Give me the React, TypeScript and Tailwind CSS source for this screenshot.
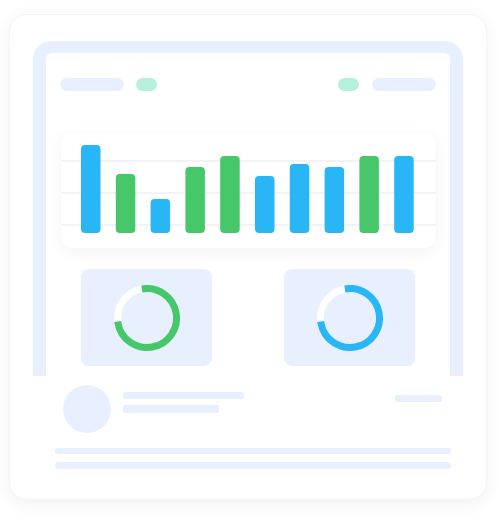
const bars = [
  { top: 12, color: '#29b6f6' },
  { top: 41, color: '#45c76a' },
  { top: 66, color: '#29b6f6' },
  { top: 34, color: '#45c76a' },
  { top: 23, color: '#45c76a' },
  { top: 43, color: '#29b6f6' },
  { top: 31, color: '#29b6f6' },
  { top: 34, color: '#29b6f6' },
  { top: 23, color: '#45c76a' },
  { top: 23, color: '#29b6f6' },
];

function BarChart() {
  return (
    <svg width="375" height="115" viewBox="0 0 375 115">
      {[28, 60, 92].map((y) => (
        <rect key={y} x="0" y={y - 1} width="375" height="2" fill="#f2f3f5" />
      ))}
      {bars.map((b, i) => (
        <rect
          key={i}
          x={20 + i * 34.8}
          y={b.top}
          width="19.5"
          height={100 - b.top}
          rx="4"
          fill={b.color}
        />
      ))}
    </svg>
  );
}

function Donut({ color }: { color: string }) {
  const r = 29.5;
  const c = 2 * Math.PI * r;
  const part = c * 0.758;
  return (
    <svg width="66" height="66" viewBox="0 0 66 66">
      <circle cx="33" cy="33" r={r} fill="none" stroke="#ffffff" strokeWidth="7" />
      <circle
        cx="33"
        cy="33"
        r={r}
        fill="none"
        stroke={color}
        strokeWidth="7"
        strokeDasharray={`${part} ${c}`}
        transform="rotate(-100 33 33)"
      />
    </svg>
  );
}

export default function App() {
  return (
    <div className="w-[500px] h-[518px] bg-white pl-[9px] pt-[14px]">
      <div className="w-[478px] h-[486px] rounded-[18px] bg-white border border-[#f4f4f5] shadow-[0_4px_18px_rgba(0,0,0,0.06)] px-[23px] pt-[26px]">
        {/* screen frame */}
        <div className="w-[430px] h-[335px] border-x-[13px] border-t-[12px] border-[#e8efff] rounded-t-[18px]">
          <div className="px-[14px] pt-[25px]">
            <div className="flex items-center justify-between h-[13px]">
              <div className="flex items-center gap-[12px]">
                <div className="w-[64px] h-[13px] rounded-full bg-[#e8efff]" />
                <div className="w-[21px] h-[13px] rounded-full bg-[#b4f0da]" />
              </div>
              <div className="flex items-center gap-[13px]">
                <div className="w-[21px] h-[13px] rounded-full bg-[#b4f0da]" />
                <div className="w-[64px] h-[13px] rounded-full bg-[#e8efff]" />
              </div>
            </div>
            <div className="mt-[42px] ml-px w-[375px] h-[115px] rounded-[12px] bg-white shadow-[0_4px_16px_rgba(0,0,0,0.05)]">
              <BarChart />
            </div>
          </div>
          <div className="mt-[21px] px-[35px] flex justify-between">
            <div className="w-[131px] h-[97px] rounded-[8px] bg-[#e8efff] flex items-center justify-center">
              <Donut color="#45c76a" />
            </div>
            <div className="w-[131px] h-[97px] rounded-[8px] bg-[#e8efff] flex items-center justify-center">
              <Donut color="#29b6f6" />
            </div>
          </div>
        </div>

        {/* profile block */}
        <div className="ml-[22px] w-[396px] pt-[9px]">
          <div className="flex items-start pl-[8px] pr-[9px]">
            <div className="w-[48px] h-[48px] rounded-full bg-[#e8efff]" />
            <div className="ml-[12px] pt-[7px] flex flex-col gap-[6px]">
              <div className="w-[121px] h-[7px] rounded-[2px] bg-[#e8efff]" />
              <div className="w-[96px] h-[8px] rounded-[2px] bg-[#e8efff]" />
            </div>
            <div className="ml-auto mt-[10px] w-[47px] h-[7px] rounded-[2px] bg-[#e8efff]" />
          </div>
          <div className="mt-[15px] flex flex-col gap-[8px]">
            <div className="h-[6px] rounded-full bg-[#e8efff]" />
            <div className="h-[7px] rounded-full bg-[#e8efff]" />
          </div>
        </div>
      </div>
    </div>
  );
}
